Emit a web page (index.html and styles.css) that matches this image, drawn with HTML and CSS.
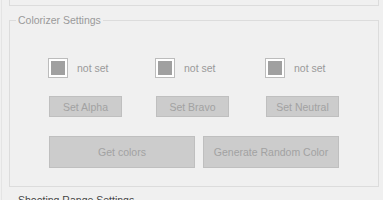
FILE: index.html
```html
<!DOCTYPE html>
<html>
<head>
    <title>Colorizer Settings</title>
    <link rel="stylesheet" href="styles.css">
</head>
<body>
    <div class="panel">
        <!-- bottom edge of the group above, scrolled off -->
        <div class="group-above"></div>

        <fieldset class="group off">
            <legend>Colorizer Settings</legend>
            <div class="picks">
                <div class="pick">
                    <div class="swatch-line">
                        <span class="swatch"></span>
                        <span class="swatch-label">not set</span>
                    </div>
                    <button class="btn small">Set Alpha</button>
                </div>
                <div class="pick mid">
                    <div class="swatch-line">
                        <span class="swatch"></span>
                        <span class="swatch-label">not set</span>
                    </div>
                    <button class="btn small">Set Bravo</button>
                </div>
                <div class="pick">
                    <div class="swatch-line">
                        <span class="swatch"></span>
                        <span class="swatch-label">not set</span>
                    </div>
                    <button class="btn small">Set Neutral</button>
                </div>
            </div>
            <div class="actions">
                <button class="btn big get">Get colors</button>
                <button class="btn big random">Generate Random Color</button>
            </div>
        </fieldset>

        <fieldset class="group next">
            <legend>Shooting Range Settings</legend>
        </fieldset>
    </div>
</body>
</html>
```

FILE: styles.css
```css
html, body {
    margin: 0;
    padding: 0;
    background: #f0f0f0;
    font-family: "Liberation Sans", Arial, sans-serif;
    font-size: 10.5px;
}

.panel {
    height: 200px;
    overflow: hidden;
    margin-left: 1px;
    border-left: 1px solid #e4e4e4;
    padding: 0 4px 0 7px;
}

.group-above {
    height: 5px;
    border: 1px solid #dcdcdc;
    border-top: none;
}

.group {
    margin: 7px 0 0 0;
    padding: 0 0 18px 0;
    border: 1px solid #dcdcdc;
    min-width: 0;
}

.group legend {
    margin-left: 6px;
    padding: 0 2px;
    line-height: 14px;
    color: #444;
}

.group.off legend {
    color: #9a9a9a;
}

.picks {
    display: flex;
    padding: 31px 0 0 38px;
}

.pick {
    display: flex;
    flex-direction: column;
    gap: 18px;
    width: 107px;
}

.pick.mid {
    width: 110px;
}

.swatch-line {
    display: flex;
    align-items: center;
    height: 20px;
}

.swatch {
    width: 20px;
    height: 20px;
    box-sizing: border-box;
    background: #a0a0a0;
    border: 1px solid #bcbcbc;
    box-shadow: inset 0 0 0 2px #fff;
}

.swatch-label {
    margin-left: 9px;
    color: #9a9a9a;
}

.btn {
    box-sizing: border-box;
    background: #cccccc;
    border: 1px solid #bfbfbf;
    color: #a2a2a2;
    font: inherit;
    padding: 0;
}

.btn.small {
    width: 73px;
    height: 21px;
    margin-left: 1px;
}

.actions {
    display: flex;
    gap: 8px;
    margin-top: 19px;
    padding-left: 39px;
}

.btn.big {
    height: 32px;
}

.btn.get {
    width: 146px;
}

.btn.random {
    width: 136px;
}

.group.next {
    margin-top: 6px;
}
```
